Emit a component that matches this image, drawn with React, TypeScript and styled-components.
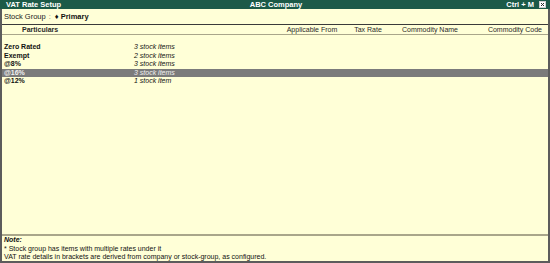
import styled, { createGlobalStyle } from "styled-components";

const Global = createGlobalStyle`
  html, body {
    margin: 0;
    padding: 0;
    background: #ffffff;
  }
  body {
    font-family: "Liberation Sans", Arial, sans-serif;
  }
`;

type Item = { name: string; count: string; selected?: boolean };

const items: Item[] = [
  { name: "Zero Rated", count: "3 stock items" },
  { name: "Exempt", count: "2 stock items" },
  { name: "@8%", count: "3 stock items" },
  { name: "@16%", count: "3 stock items", selected: true },
  { name: "@12%", count: "1 stock item" },
];

const App = () => {
  return (
    <>
      <Global />
      <Window>
        <TitleBar>
          <TitleLeft>VAT Rate Setup</TitleLeft>
          <TitleCenter>ABC Company</TitleCenter>
          <TitleRight>
            Ctrl + M
            <CloseBox>
              <svg width="7" height="7" viewBox="0 0 7 7">
                <rect x="0.5" y="0.5" width="6" height="6" fill="#fff" stroke="#cfcfcf" />
                <path d="M2 2 L5 5 M5 2 L2 5" stroke="#2a2a2a" strokeWidth="1" />
              </svg>
            </CloseBox>
          </TitleRight>
        </TitleBar>
        <GroupRow>
          <GroupLabel>Stock Group</GroupLabel>
          <GroupColon>:</GroupColon>
          <GroupValue>♦ Primary</GroupValue>
        </GroupRow>
        <HeaderRow>
          <HeaderCell $align="left" $pad={20} $bold>Particulars</HeaderCell>
          <HeaderCell $align="center">Applicable From</HeaderCell>
          <HeaderCell $align="center">Tax Rate</HeaderCell>
          <HeaderCell $align="center">Commodity Name</HeaderCell>
          <HeaderCell $align="right" $pad={6}>Commodity Code</HeaderCell>
        </HeaderRow>
        <Body>
          {items.map((it) => (
            <Row key={it.name} $selected={it.selected}>
              <RowName>{it.name}</RowName>
              <RowCount>{it.count}</RowCount>
            </Row>
          ))}
        </Body>
        <Footer>
          <NoteTitle>Note:</NoteTitle>
          <NoteLine>* Stock group has items with multiple rates under it</NoteLine>
          <NoteLine>VAT rate details in brackets are derived from company or stock-group, as configured.</NoteLine>
        </Footer>
      </Window>
    </>
  );
};

export default App;

const Window = styled.div`
  width: 550px;
  height: 263px;
  box-sizing: border-box;
  display: flex;
  flex-direction: column;
  background: #ffffd7;
  border-left: 2px solid #5c5c5c;
  border-right: 2px solid #5c5c5c;
  border-bottom: 2px solid #5c5c5c;
  color: #111;
  font-size: 7px;
`;

const TitleBar = styled.div`
  height: 9px;
  margin: 0 -2px;
  padding: 0 4px 0 6px;
  display: grid;
  grid-template-columns: 1fr auto 1fr;
  align-items: center;
  background: #1c5a48;
  color: #ffffff;
  font-weight: bold;
  font-size: 7.5px;
  line-height: 9px;
`;

const TitleLeft = styled.span``;

const TitleCenter = styled.span`
  text-align: center;
`;

const TitleRight = styled.span`
  display: flex;
  justify-content: flex-end;
  align-items: center;
  gap: 5px;
`;

const CloseBox = styled.span`
  display: flex;
  width: 7px;
  height: 7px;
`;

const GroupRow = styled.div`
  height: 15px;
  display: flex;
  align-items: center;
  padding-left: 2px;
  font-size: 7.5px;
`;

const GroupLabel = styled.span`
  color: #222;
`;

const GroupColon = styled.span`
  color: #777;
  margin: 0 4px 0 3px;
`;

const GroupValue = styled.span`
  font-weight: bold;
`;

const HeaderRow = styled.div`
  height: 9px;
  display: grid;
  grid-template-columns: 280px 60px 52px 72px 1fr;
  align-items: center;
  border-top: 1px solid #3a3a3a;
  border-bottom: 1px solid #a9a68a;
  font-size: 7px;
  line-height: 9px;
`;

const HeaderCell = styled.span<{
  $align: "left" | "center" | "right";
  $pad?: number;
  $bold?: boolean;
}>`
  text-align: ${(p) => p.$align};
  padding-left: ${(p) => (p.$align === "left" ? p.$pad ?? 0 : 0)}px;
  padding-right: ${(p) => (p.$align === "right" ? p.$pad ?? 0 : 0)}px;
  font-weight: ${(p) => (p.$bold ? "bold" : "normal")};
  color: #2a2a2a;
`;

const Body = styled.div`
  flex: 1;
  padding-top: 8px;
`;

const Row = styled.div<{ $selected?: boolean }>`
  height: 8.5px;
  display: grid;
  grid-template-columns: 130px 1fr;
  align-items: center;
  padding-left: 2px;
  line-height: 8.5px;
  background: ${(p) => (p.$selected ? "#7b7b7b" : "transparent")};
  color: ${(p) => (p.$selected ? "#f2f2f2" : "#111")};
`;

const RowName = styled.span`
  font-weight: bold;
`;

const RowCount = styled.span`
  font-style: italic;
`;

const Footer = styled.div`
  box-sizing: border-box;
  height: 27px;
  border-top: 2px solid #a9a68a;
  padding: 0 2px;
  font-size: 7px;
  line-height: 8.6px;
`;

const NoteTitle = styled.div`
  font-weight: bold;
  font-style: italic;
`;

const NoteLine = styled.div``;
